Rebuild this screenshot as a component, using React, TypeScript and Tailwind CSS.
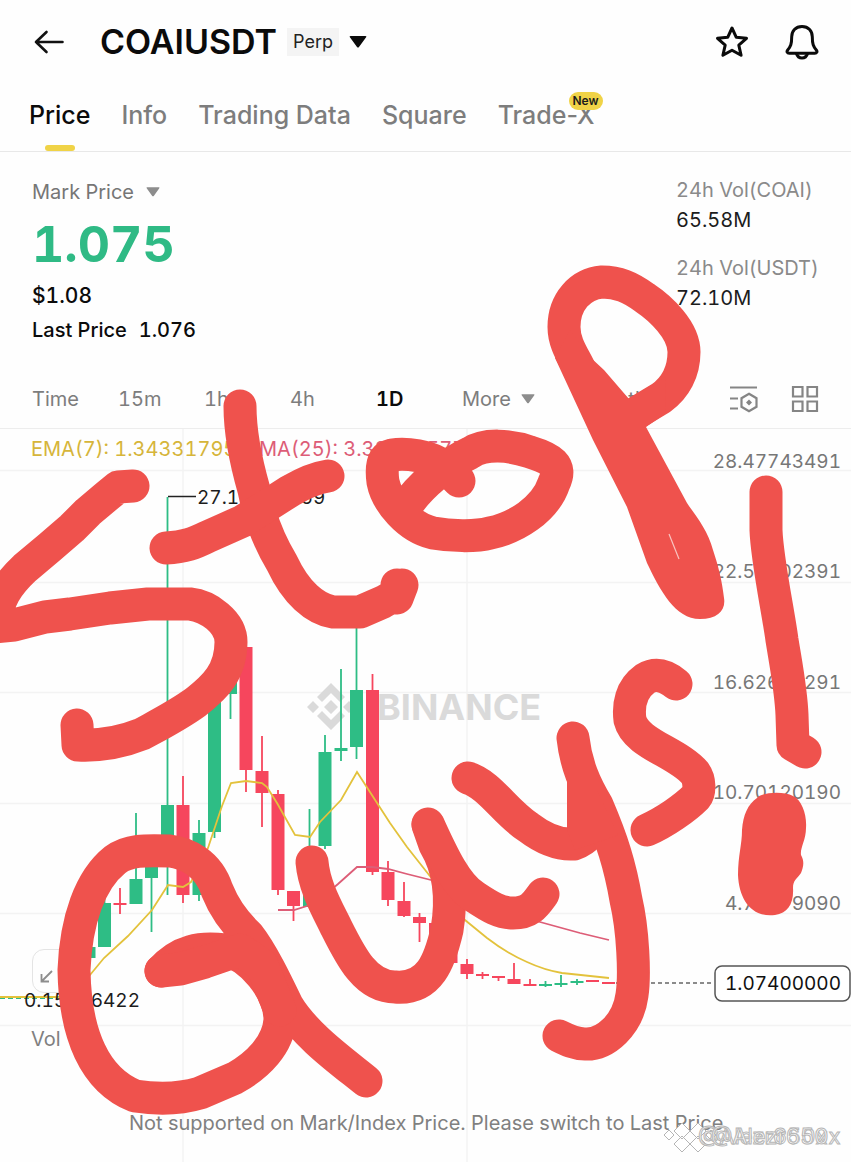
import React from 'react';
import clsx from 'clsx';

interface Candle {
    x: number;
    open: number;
    close: number;
    high: number;
    low: number;
    up?: boolean;
}

const UP = '#2ebd85';
const DOWN = '#f6465d';
const MARKER = '#ef524d';

const tabs = ['Price', 'Info', 'Trading Data', 'Square', 'Trade-X'];
const intervals = ['Time', '15m', '1h', '4h', '1D'];

const volumes = [
    { label: '24h Vol(COAI)', value: '65.58M' },
    { label: '24h Vol(USDT)', value: '72.10M' },
];

const gridRows = [470, 582, 692, 803, 913, 1025];

const axisLabels = [
    { y: 468, label: '28.47743491' },
    { y: 578, label: '22.55202391' },
    { y: 689, label: '16.62661291' },
    { y: 799, label: '10.70120190' },
    { y: 910, label: '4.77579090' },
];

// open/close are the top and bottom of the body in chart coordinates
const candles: Candle[] = [
    { x: 89, open: 947, close: 958, high: 940, low: 962, up: true },
    { x: 104.5, open: 903, close: 947, high: 895, low: 947, up: true },
    { x: 120, open: 903, close: 905, high: 888, low: 914 },
    { x: 136, open: 879, close: 904, high: 813, low: 904, up: true },
    { x: 151.5, open: 865, close: 878, high: 860, low: 932, up: true },
    { x: 167.5, open: 805, close: 866, high: 497, low: 895, up: true },
    { x: 183, open: 805, close: 895, high: 776, low: 903 },
    { x: 199, open: 833, close: 895, high: 820, low: 901, up: true },
    { x: 214.5, open: 680, close: 832, high: 670, low: 838, up: true },
    { x: 230.5, open: 655, close: 694, high: 640, low: 719, up: true },
    { x: 246, open: 647, close: 770, high: 640, low: 792 },
    { x: 262, open: 771, close: 793, high: 736, low: 827 },
    { x: 278, open: 794, close: 890, high: 790, low: 895 },
    { x: 293.5, open: 891, close: 906, high: 891, low: 921 },
    { x: 309.5, open: 848, close: 907, high: 809, low: 907, up: true },
    { x: 325, open: 752, close: 846, high: 735, low: 849, up: true },
    { x: 341, open: 748, close: 751, high: 669, low: 761, up: true },
    { x: 356.5, open: 690, close: 747, high: 600, low: 759, up: true },
    { x: 372.5, open: 690, close: 872, high: 674, low: 875 },
    { x: 388, open: 872, close: 900, high: 861, low: 906 },
    { x: 404, open: 901, close: 916, high: 882, low: 917 },
    { x: 419.5, open: 917, close: 923, high: 913, low: 942 },
    { x: 435.5, open: 923, close: 940, high: 920, low: 944 },
    { x: 451, open: 940, close: 963, high: 936, low: 963 },
    { x: 467, open: 964, close: 974, high: 959, low: 979 },
    { x: 482.5, open: 974, close: 976, high: 972, low: 979 },
    { x: 498.5, open: 976, close: 978, high: 976, low: 981 },
    { x: 514, open: 979, close: 984, high: 963, low: 984 },
    { x: 530, open: 984, close: 986, high: 979, low: 986 },
    { x: 545.5, open: 984, close: 986, high: 981, low: 987, up: true },
    { x: 561, open: 983, close: 985, high: 975, low: 987, up: true },
    { x: 577, open: 981, close: 983, high: 979, low: 985, up: true },
    { x: 592.5, open: 980, close: 982, high: 980, low: 982 },
    { x: 608.5, open: 982, close: 984, high: 982, low: 984 },
];

const ema7 =
    'M0 997L58 997L75 990L90 975L104 958L128 936L152 910L168 885L183 887L191 882L208 848L222 806L231 783L246 781L262 783L267 787L277 803L295 835L310 837L320 822L341 800L357 772L368 789L390 823L407 847L433 880L465 920L487 938C500 948 513 956 527 962C540 968 550 971 562 973L609 978';
const ema25 =
    'M278 910L294 910L310 905L325 895L338 884L357 867L372 867L388 869L407 874L435 881L500 908L540 922L580 933L609 940';

const markerStrokes = [
    // S
    'M133 486L118 487L107 496L88 512L72 528L50 547L25 568C8 584 -4 600 -5 627L14 625L45 617L70 614L110 608L148 604L190 604C208 606 231 622 231 642C231 672 215 687 196 702C178 715 166 721 142 734C122 742 100 746 78 745L77 725',
    // t
    'M240 406C240 430 244 455 254 490C260 520 270 543 282 563C296 593 315 609 333 612L360 612L383 602L397 594L397 585M402 585L397 598',
    'M166 548C185 547 195 543 207 537L225 529L243 521L290 491C302 484 315 478 328 476',
    // o
    'M459 481L445 467C430 455 405 453 392 455C380 458 382 475 383 482C387 502 408 527 433 533C450 536 475 537 490 533C515 528 545 510 554 483C563 465 550 458 530 452C510 445 485 443 470 453C445 465 420 485 405 508',
    // p
    'M636 413L661 398C675 388 684 372 684 352C684 330 660 308 645 298C630 287 618 282 602 282C580 284 564 302 564 327C564 345 575 358 580 370L605 420',
    // exclamation mark
    'M766 492L766 530C767 560 778 610 782 640C786 665 791 690 792 715L793 745L805 752',
    // Q
    'M161 971C180 950 200 947 225 950C250 955 280 990 280 1020C278 1045 258 1065 235 1078L200 1093C180 1099 155 1099 135 1096C95 1080 75 1035 74 970C76 920 90 880 115 860C128 850 145 850 170 851C185 853 208 862 217 890C223 905 232 920 248 935C262 953 275 980 287 1005C305 1035 340 1060 366 1081',
    'M161 971L180 969L205 962L240 950L262 965L280 1010',
    // u
    'M312 862C314 885 325 905 335 925C350 955 365 987 395 987C430 990 440 960 447 930C452 900 450 870 435 845L428 825',
    'M428 824C440 850 455 885 475 897C490 907 500 913 513 913C530 913 535 905 543 894',
    // y
    'M468 778C490 785 505 812 528 827C545 840 560 845 574 844C585 840 592 835 592 815',
    'M573 738C576 765 585 785 597 805C612 840 620 865 626 900C633 930 635 975 632 995C628 1025 605 1045 585 1044C575 1044 567 1040 559 1036',
    // s
    'M676 684C665 675 655 673 645 679C631 689 628 705 630 720C636 744 677 752 695 773C700 780 700 792 696 797C685 808 665 822 647 830',
];

const markerFills = [
    'M555 358L593 440L627 507L647 563C660 590 675 619 700 619C718 619 726 610 724 598C722 580 718 565 713 550C708 530 695 515 687 503L653 440L646 427L665 414L666 376L645 389L629 399L604 370L590 357L570 330Z',
    'M757 798C762 792 784 791 793 796C802 800 807 815 806 828C806 840 800 848 801 855C805 862 803 868 801 873C797 879 793 880 793 888C794 903 788 913 775 915C752 918 739 900 738 875C738 855 742 845 742 830C743 815 748 804 757 798Z',
    'M567 775L597 790L618 835L596 843L575 850L567 830Z',
];

function Caret({ className }: { className: string }) {
    return (
        <svg viewBox="0 0 18 12" className={className} fill="currentColor" aria-hidden="true">
            <path d="M1.5 0h15q1.500 0 .6 1.200L10 11q-1 1.200-2 0L.9 1.200Q0 0 1.500 0z" />
        </svg>
    );
}

function Header() {
    return (
        <header className="flex h-[84px] items-center pr-8 pl-[34px]">
            <button type="button" aria-label="Back">
                <svg viewBox="0 0 30 24" className="h-6 w-[30px]" fill="none" stroke="#111" strokeWidth="2.600" strokeLinecap="round" strokeLinejoin="round">
                    <path d="M28.500 12H2M12.500 2L2 12l10.500 10" />
                </svg>
            </button>
            <h1 className="ml-9 text-[34px] leading-10 font-semibold text-[#0b0b0b]">COAIUSDT</h1>
            <button type="button" className="ml-2.5 flex items-center gap-2.5">
                <span className="bg-[#f4f4f4] px-1.5 text-lg leading-7 text-[#222]">Perp</span>
                <Caret className="h-3 w-[18px] text-[#0b0b0b]" />
            </button>
            <div className="ml-auto flex items-center gap-9">
                <button type="button" aria-label="Add to favourites">
                    <svg viewBox="0 0 34 34" className="size-[34px]" fill="none" stroke="#0b0b0b" strokeWidth="3" strokeLinejoin="round">
                        <path d="M17 3l4.300 9.300 10.200 1-7.700 6.800 2.300 10.200L17 25.200 7.900 30.300l2.300-10.200-7.700-6.800 10.200-1z" />
                    </svg>
                </button>
                <button type="button" aria-label="Notifications">
                    <svg viewBox="0 0 34 36" className="h-9 w-[34px]" fill="none" stroke="#0b0b0b" strokeWidth="3" strokeLinejoin="round">
                        <path d="M17 2.500c-6.500 0-10.300 4.500-10.300 10.300 0 7.200-1 9.700-4 13.200-1.300 1.600-.6 3.200 1.500 3.200h25.600c2.100 0 2.800-1.600 1.500-3.200-3-3.500-4-6-4-13.200C27.300 7 23.500 2.500 17 2.500z" />
                        <path d="M11.500 29.500c.8 3 2.800 4.500 5.500 4.500s4.700-1.500 5.500-4.500" />
                    </svg>
                </button>
            </div>
        </header>
    );
}

function Tabs() {
    return (
        <nav className="flex h-[68px] gap-[31px] border-b border-[#e8e8e8] pt-4 pl-[29px] text-[25px] leading-[30px] font-medium proportional-nums">
            {tabs.map((tab, i) => (
                <a
                    key={tab}
                    href="#"
                    className={clsx('relative flex justify-center whitespace-nowrap', i === 0 ? 'text-[#0b0b0b]' : 'text-[#7d7d7d]')}
                >
                    {tab}
                    {i === 0 && <span className="absolute bottom-0 h-1.5 w-[30px] rounded-full bg-[#f0d347]" />}
                    {tab === 'Trade-X' && (
                        <span className="absolute -top-2 -right-2 rounded-full bg-[#f0d347] px-1 text-xs leading-[18px] font-semibold text-[#1c1c1c]">
                            New
                        </span>
                    )}
                </a>
            ))}
        </nav>
    );
}

function Summary() {
    return (
        <section className="flex h-[218px] justify-between text-xl leading-6">
            <div className="pt-7 pl-8 text-[#0b0b0b]">
                <button type="button" className="flex items-center gap-3 text-[#767676]">
                    Mark Price
                    <Caret className="h-2.5 w-3.5 text-[#8d8d8d]" />
                </button>
                <p className="mt-3 text-[50px] leading-14 font-bold text-[#2fba85]">1.075</p>
                <p className="mt-3 text-[21px] font-medium">$1.08</p>
                <p className="mt-2.5 flex gap-3 font-medium">
                    <span>Last Price</span>
                    <span>1.076</span>
                </p>
            </div>
            <dl className="w-[175px] pt-[26px]">
                {volumes.map(v => (
                    <div key={v.label} className="mb-6">
                        <dt className="text-[#8a8a8a]">{v.label}</dt>
                        <dd className="mt-1.5 text-[#1c1c1c]">{v.value}</dd>
                    </div>
                ))}
            </dl>
        </section>
    );
}

function IntervalBar() {
    return (
        <div className="flex h-[59px] items-center border-b border-[#ededed] pr-8 pl-8 text-xl text-[#7d7d7d]">
            {intervals.map(item => (
                <button key={item} type="button" className={clsx('w-[86px] text-left', item === '1D' && 'font-semibold text-[#0b0b0b]')}>
                    {item}
                </button>
            ))}
            <button type="button" className="flex w-32 items-center gap-2.5">
                More
                <Caret className="h-2.5 w-3.5 text-[#8d8d8d]" />
            </button>
            <button type="button">Depth</button>
            <div className="ml-auto flex items-center gap-8">
                <button type="button" aria-label="Chart settings">
                    <svg viewBox="0 0 30 28" className="h-7 w-[30px]" fill="none" stroke="#858585" strokeWidth="2.200">
                        <path d="M1 2.500h27M1 13.500h8M1 23.500h8M20 8.800l7.500 4.400v8.600L20 26.200l-7.500-4.400v-8.600z" />
                        <path d="M20 14.500l3 3-3 3-3-3z" fill="#858585" stroke="none" />
                    </svg>
                </button>
                <button type="button" aria-label="Layout">
                    <svg viewBox="0 0 28 28" className="size-7" fill="none" stroke="#858585" strokeWidth="2.200">
                        <path d="M2 2h9.500v9.500H2zM16.500 2H26v9.500h-9.500zM2 16.500h9.500V26H2zM16.500 16.500H26V26h-9.500z" />
                    </svg>
                </button>
            </div>
        </div>
    );
}

function Chart() {
    return (
        <section className="relative">
            <svg viewBox="0 429 851 733" className="block w-full" fontSize="20">
                <g stroke="#f3f3f3" strokeWidth="1.500">
                    {gridRows.map(y => (
                        <path key={y} d={`M0 ${y}.5H851`} />
                    ))}
                    <path d="M183 429V1162M467 429V1162" />
                </g>

                <g fill="#dadada">
                    <path d="M331 683l14 14-5 5-9-9-9 9-5-5zM331 730l14-14-5-5-9 9-9-9-5 5zM331 700l7 7-7 7-7-7zM313 701l6 6-6 6-6-6zM349 701l6 6-6 6-6-6z" />
                    <text x="377" y="720" fontSize="36" fontWeight="700">BINANCE</text>
                </g>

                {candles.map(c => (
                    <g key={c.x} fill={c.up ? UP : DOWN} stroke={c.up ? UP : DOWN}>
                        <path d={`M${c.x} ${c.high}V${c.low}`} strokeWidth="1.800" />
                        <rect x={c.x - 6.500} y={c.open} width="13" height={c.close - c.open} stroke="none" />
                    </g>
                ))}
                <path d="M0 997.500H58" stroke={UP} strokeWidth="3" strokeDasharray="5 3" />
                <path d={ema7} fill="none" stroke="#e3c23c" strokeWidth="1.800" />
                <path d={ema25} fill="none" stroke="#dd5d77" strokeWidth="1.800" />

                <text x="31" y="456" fill="#d6b53a">EMA(7): 1.34331795</text>
                <text x="247" y="456" fill="#dd5d77">EMA(25): 3.38210577</text>

                <path d="M168 496.500h28" stroke="#222" strokeWidth="1.500" />
                <g fill="#1c1c1c" fontSize="19">
                    <text x="197" y="504">27.16930559</text>
                    <text x="24" y="1007">0.15356422</text>
                </g>

                <g fill="#777777" fontSize="19" textAnchor="end">
                    {axisLabels.map(a => (
                        <text key={a.y} x="841" y={a.y}>{a.label}</text>
                    ))}
                </g>

                <path d="M616 983H714" stroke="#666" strokeWidth="1.500" strokeDasharray="4 3" />
                <rect x="715" y="966" width="135" height="35" rx="7" fill="#fff" stroke="#555" strokeWidth="1.500" />
                <text x="841" y="990" fontSize="19" textAnchor="end" fill="#111">1.07400000</text>

                <text x="31" y="1046" fill="#808080">Vol</text>
                <text x="129" y="1130" fill="#808080">Not supported on Mark/Index Price. Please switch to Last Price.</text>

                <g fill="#fff" stroke="#b5b5b5" strokeWidth="1">
                    <path d="M682 1123l8 8-8 8-8-8zM698 1123l8 8-8 8-8-8zM669 1130l5 5-5 5-5-5zM682 1136l8 8-8 8-8-8zM698 1136l8 8-8 8-8-8zM711 1130l5 5-5 5-5-5z" />
                    <text x="698" y="1144" fontSize="22">@Alezr650x</text>
                    <text x="711" y="1144" fontSize="22">@Alezr650x</text>
                </g>
            </svg>
            <button
                type="button"
                aria-label="Expand chart"
                className="absolute top-[71%] left-8 flex h-[44px] w-11 items-end rounded-xl border border-[#e4e4e4] pb-2 pl-1.5"
            >
                <svg viewBox="0 0 14 14" className="size-3.5" fill="none" stroke="#8d8d8d" strokeWidth="1.800">
                    <path d="M13 1L3 11M2.500 4v7.500H10" />
                </svg>
            </button>
        </section>
    );
}

function MarkerOverlay() {
    return (
        <svg viewBox="0 0 851 1162" className="pointer-events-none absolute top-0 left-0 w-full" aria-hidden="true">
            <g fill="none" stroke={MARKER} strokeWidth="33" strokeLinecap="round" strokeLinejoin="round">
                {markerStrokes.map(d => (
                    <path key={d} d={d} />
                ))}
            </g>
            {markerFills.map(d => (
                <path key={d} d={d} fill={MARKER} />
            ))}
            <path d="M669 534L679 559" stroke="#f8c4c0" strokeWidth="1.200" />
        </svg>
    );
}

export default function App() {
    return (
        <main className="relative overflow-hidden bg-[#fefefe] font-['Inter','Liberation_Sans',sans-serif] tabular-nums">
            <Header />
            <Tabs />
            <Summary />
            <IntervalBar />
            <Chart />
            <MarkerOverlay />
        </main>
    );
}
